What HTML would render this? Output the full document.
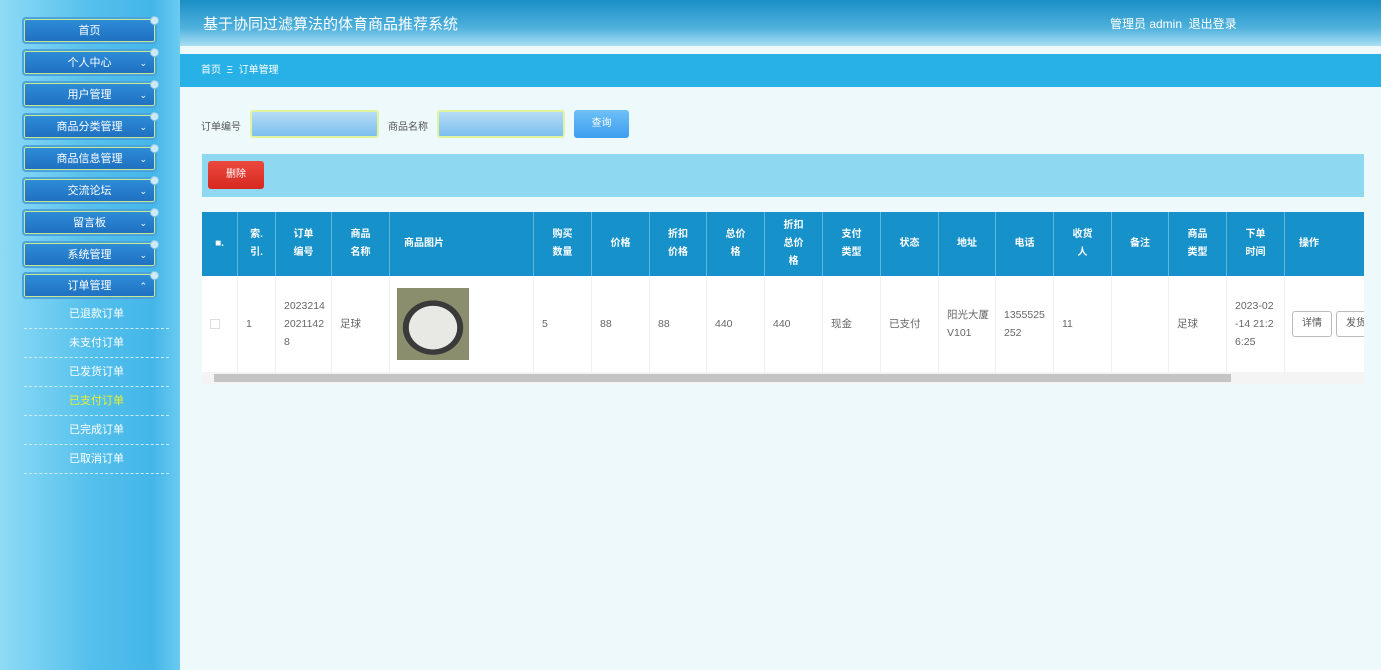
<!DOCTYPE html>
<html><head><meta charset="utf-8"><style>
*{margin:0;padding:0;box-sizing:border-box}
body{width:1381px;height:670px;overflow:hidden;position:relative;font-family:"Liberation Sans","Noto Sans CJK SC",sans-serif;background:#eef9fc}
.side{position:absolute;left:0;top:0;width:180px;height:670px;background:linear-gradient(90deg,#8edbf5 0%,#55c0ec 50%,#43b6e8 85%,#6ccbf0 100%)}
.btn{position:absolute;left:22px;width:135px;height:27px;border-radius:4px;background:linear-gradient(180deg,#2d8ed8,#1f6fc0);border:2px solid #4aa3dc;box-shadow:inset 0 0 0 1px #c8e890;color:#fff;font-size:11px;text-align:center;line-height:24px}
.btn::after{content:"";position:absolute;right:-4px;top:-3px;width:7px;height:7px;border-radius:50%;background:#cfe9f6;border:1px solid #8fcbe8}
.btn .ar{position:absolute;right:8px;top:0;font-size:9px}
.sub{position:absolute;left:24px;width:145px;height:29px;border-bottom:1px dashed #c9ecfa;color:#fff;font-size:11px;text-align:center;line-height:28px}
.top{position:absolute;left:180px;top:0;width:1201px;height:46px;background:linear-gradient(180deg,#1a8fc6 0%,#4eb0dc 60%,#a8dff2 100%)}
.top .t{position:absolute;left:23px;top:13px;color:#fff;font-size:15px}
.top .r{position:absolute;left:930px;top:15px;color:#fff;font-size:12px}
.bc{position:absolute;left:180px;top:54px;width:1201px;height:33px;background:#27b1e6;color:#fff;font-size:10px;line-height:33px;padding-left:21px}
.lbl{position:absolute;top:118px;font-size:10px;color:#555}
.inp{position:absolute;top:110px;height:28px;border-radius:3px;background:linear-gradient(180deg,#b6dcf5,#7bbfee);border:2px solid #e2f3a0}
.q{position:absolute;left:574px;top:110px;width:55px;height:28px;border-radius:3px;background:linear-gradient(180deg,#6ec0f6,#3d9ef0);color:#fff;font-size:10px;text-align:center;line-height:28px}
.bar{position:absolute;left:202px;top:154px;width:1162px;height:43px;background:#8fd8f2}
.del{position:absolute;left:208px;top:161px;width:56px;height:28px;border-radius:3px;background:linear-gradient(180deg,#ec4a3f,#d6281f);color:#fff;font-size:10px;text-align:center;line-height:28px}
.tbl{position:absolute;left:202px;top:212px;width:1162px;height:172px;overflow:hidden;background:#fff}
.h{position:absolute;top:0;height:64px;background:#1791c9;border-right:1px solid #5fb7e0;color:#fff;font-size:10px;font-weight:bold;display:flex;align-items:center;justify-content:center;text-align:center;line-height:18px}
.c{position:absolute;top:64px;height:96px;border-right:1px solid #f0f0f0;color:#666;font-size:10.5px;display:flex;align-items:center;padding-left:8px;line-height:18px}
.sb{position:absolute;left:202px;top:372px;width:1162px;height:12px;background:#f4f4f4}
.sb .th{position:absolute;left:12px;top:2px;width:1017px;height:8px;background:#c4c4c4}
.ob{display:inline-block;border:1px solid #bbb;border-radius:3px;padding:3px 9px;font-size:10px;color:#555;margin-right:4px;background:#fff}
</style></head><body>
<div class="side">
<div class="btn" style="top:17px">首页</div>
<div class="btn" style="top:49px">个人中心<span class="ar">⌄</span></div>
<div class="btn" style="top:81px">用户管理<span class="ar">⌄</span></div>
<div class="btn" style="top:113px">商品分类管理<span class="ar">⌄</span></div>
<div class="btn" style="top:145px">商品信息管理<span class="ar">⌄</span></div>
<div class="btn" style="top:177px">交流论坛<span class="ar">⌄</span></div>
<div class="btn" style="top:209px">留言板<span class="ar">⌄</span></div>
<div class="btn" style="top:241px">系统管理<span class="ar">⌄</span></div>
<div class="btn" style="top:272px">订单管理<span class="ar">⌃</span></div>
<div class="sub" style="top:300px">已退款订单</div>
<div class="sub" style="top:329px">未支付订单</div>
<div class="sub" style="top:358px">已发货订单</div>
<div class="sub" style="top:387px;color:#e8f030">已支付订单</div>
<div class="sub" style="top:416px">已完成订单</div>
<div class="sub" style="top:445px">已取消订单</div>
</div>
<div class="top"><div class="t">基于协同过滤算法的体育商品推荐系统</div><div class="r">管理员 admin &nbsp;退出登录</div></div>
<div class="bc">首页 &nbsp;Ξ &nbsp;订单管理</div>
<div class="lbl" style="left:201px">订单编号</div>
<div class="inp" style="left:250px;width:129px"></div>
<div class="lbl" style="left:388px">商品名称</div>
<div class="inp" style="left:437px;width:128px"></div>
<div class="q">查询</div>
<div class="bar"></div>
<div class="del">删除</div>
<div class="tbl">
<div class="h" style="left:0;width:36px">■.</div>
<div class="h" style="left:36px;width:38px">索.<br>引.</div>
<div class="h" style="left:74px;width:56px">订单<br>编号</div>
<div class="h" style="left:130px;width:58px">商品<br>名称</div>
<div class="h" style="left:188px;width:144px;justify-content:flex-start;padding-left:14px">商品图片</div>
<div class="h" style="left:332px;width:58px">购买<br>数量</div>
<div class="h" style="left:390px;width:58px">价格</div>
<div class="h" style="left:448px;width:57px">折扣<br>价格</div>
<div class="h" style="left:505px;width:58px">总价<br>格</div>
<div class="h" style="left:563px;width:58px">折扣<br>总价<br>格</div>
<div class="h" style="left:621px;width:58px">支付<br>类型</div>
<div class="h" style="left:679px;width:58px">状态</div>
<div class="h" style="left:737px;width:57px">地址</div>
<div class="h" style="left:794px;width:58px">电话</div>
<div class="h" style="left:852px;width:58px">收货<br>人</div>
<div class="h" style="left:910px;width:57px">备注</div>
<div class="h" style="left:967px;width:58px">商品<br>类型</div>
<div class="h" style="left:1025px;width:58px">下单<br>时间</div>
<div class="h" style="left:1083px;width:80px;justify-content:flex-start;padding-left:14px">操作</div>
<div class="c" style="left:0;width:36px"><span style="display:inline-block;width:10px;height:10px;border:1px solid #ddd"></span></div>
<div class="c" style="left:36px;width:38px">1</div>
<div class="c" style="left:74px;width:56px">2023214<br>2021142<br>8</div>
<div class="c" style="left:130px;width:58px">足球</div>
<div class="c" style="left:188px;width:144px;padding-left:7px"><div style="width:72px;height:72px;background:radial-gradient(ellipse 40px 36px at 50% 55%,#e8e8e4 0 60%,#3a3a3a 61% 75%,#8a8e6c 76%)"></div></div>
<div class="c" style="left:332px;width:58px">5</div>
<div class="c" style="left:390px;width:58px">88</div>
<div class="c" style="left:448px;width:57px">88</div>
<div class="c" style="left:505px;width:58px">440</div>
<div class="c" style="left:563px;width:58px">440</div>
<div class="c" style="left:621px;width:58px">现金</div>
<div class="c" style="left:679px;width:58px">已支付</div>
<div class="c" style="left:737px;width:57px">阳光大厦<br>V101</div>
<div class="c" style="left:794px;width:58px">1355525<br>252</div>
<div class="c" style="left:852px;width:58px">11</div>
<div class="c" style="left:910px;width:57px"></div>
<div class="c" style="left:967px;width:58px">足球</div>
<div class="c" style="left:1025px;width:58px">2023-02<br>-14 21:2<br>6:25</div>
<div class="c" style="left:1083px;width:100px;padding-left:7px;white-space:nowrap"><span class="ob">详情</span><span class="ob">发货</span></div>
</div>
<div class="sb"><div class="th"></div></div>
</body></html>
